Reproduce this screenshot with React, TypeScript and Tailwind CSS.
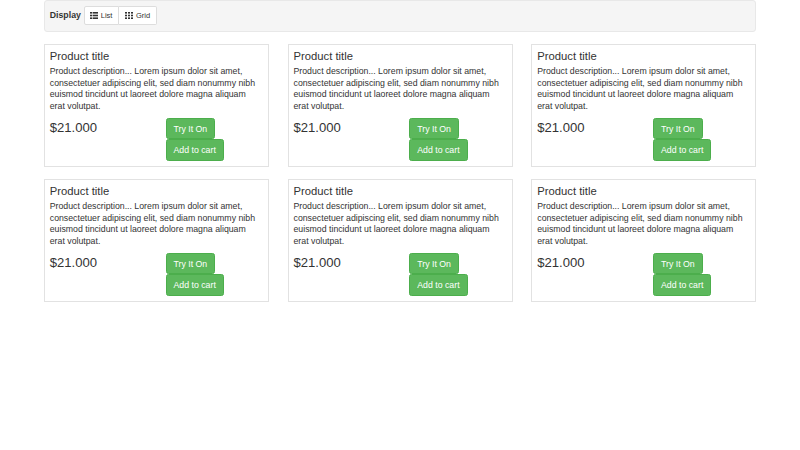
const products = [0, 1, 2, 3, 4, 5];

function ListIcon() {
  return (
    <svg width="8" height="7" viewBox="0 0 8 7" fill="currentColor" className="shrink-0">
      <rect x="0" y="0" width="2" height="1.6" />
      <rect x="2.6" y="0" width="5.4" height="1.6" />
      <rect x="0" y="2.7" width="2" height="1.6" />
      <rect x="2.6" y="2.7" width="5.4" height="1.6" />
      <rect x="0" y="5.4" width="2" height="1.6" />
      <rect x="2.6" y="5.4" width="5.4" height="1.6" />
    </svg>
  );
}

function GridIcon() {
  return (
    <svg width="8" height="7" viewBox="0 0 8 7" fill="currentColor" className="shrink-0">
      <rect x="0" y="0" width="2" height="1.6" />
      <rect x="3" y="0" width="2" height="1.6" />
      <rect x="6" y="0" width="2" height="1.6" />
      <rect x="0" y="2.7" width="2" height="1.6" />
      <rect x="3" y="2.7" width="2" height="1.6" />
      <rect x="6" y="2.7" width="2" height="1.6" />
      <rect x="0" y="5.4" width="2" height="1.6" />
      <rect x="3" y="5.4" width="2" height="1.6" />
      <rect x="6" y="5.4" width="2" height="1.6" />
    </svg>
  );
}

function ProductCard() {
  return (
    <div className="border border-[#e2e2e2] bg-white px-[5px] pt-[4px] h-[123px]">
      <h4 className="text-[11.25px] leading-[15px] text-[#333333]">Product title</h4>
      <p className="text-[8.75px] leading-[11.5px] mt-[2px] text-[#333333]">
        Product description... Lorem ipsum dolor sit amet, consectetuer adipiscing elit, sed diam nonummy nibh euismod tincidunt ut laoreet dolore magna aliquam erat volutpat.
      </p>
      <div className="flex mt-[6px]">
        <div className="w-[115.75px] pt-[1px] text-[13.125px] leading-[18px] text-[#333333]">$21.000</div>
        <div className="flex flex-col items-start">
          <button className="h-[21.25px] pt-[2px] px-[7px] rounded-[2.5px] bg-[#5cb85c] border border-[#4cae4c] text-white text-[8.75px]">Try It On</button>
          <button className="h-[21.25px] pt-[2px] px-[7px] rounded-[2.5px] bg-[#5cb85c] border border-[#4cae4c] text-white text-[8.75px]">Add to cart</button>
        </div>
      </div>
    </div>
  );
}

export default function App() {
  return (
    <div className="w-[800px] h-[450px] bg-white px-[43.75px] font-['Liberation_Sans',Arial,sans-serif] text-[#333333]">
      <div className="h-[31.5px] bg-[#f5f5f5] border border-[#e8e8e8] rounded-[3px] flex items-center px-[5px]">
        <strong className="text-[8.75px]">Display</strong>
        <div className="flex ml-[3px]">
          <a className="w-[35px] h-[19px] flex items-center justify-center gap-[2.5px] bg-white border border-[#dddddd] rounded-l-[2px] text-[7.5px]">
            <ListIcon />
            List
          </a>
          <a className="w-[38.5px] h-[19px] flex items-center justify-center gap-[3px] bg-white border border-[#dddddd] border-l-0 rounded-r-[2px] text-[7.5px]">
            <GridIcon />
            Grid
          </a>
        </div>
      </div>
      <div className="grid grid-cols-3 gap-x-[18.75px] gap-y-[12px] mt-[12.5px]">
        {products.map((p) => (
          <ProductCard key={p} />
        ))}
      </div>
    </div>
  );
}
